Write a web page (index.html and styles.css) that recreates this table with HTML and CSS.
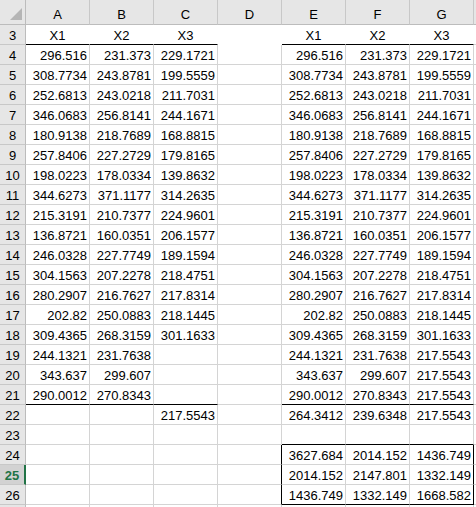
FILE: index.html
```html
<!DOCTYPE html>
<html>
<head>
<meta charset="utf-8">
<link rel="stylesheet" href="styles.css">
</head>
<body>
<div class="sheet">
  <div class="corner"><svg width="25" height="24" viewBox="0 0 25 24"><polygon points="22,8 22,20 10,20" fill="#b5b5b5"/></svg></div>
  <div class="ch">A</div><div class="ch">B</div><div class="ch">C</div><div class="ch">D</div><div class="ch">E</div><div class="ch">F</div><div class="ch">G</div><div class="ch last"></div>

  <div class="rh">3</div>
  <div class="c t w bb">X1</div><div class="c t w bb">X2</div><div class="c t w bb">X3</div><div class="c w wb"></div><div class="c t w bb">X1</div><div class="c t w bb">X2</div><div class="c t w bb">X3</div><div class="c w"></div>

  <div class="rh">4</div>
  <div class="c">296.516</div><div class="c">231.373</div><div class="c">229.1721</div><div class="c"></div><div class="c">296.516</div><div class="c">231.373</div><div class="c">229.1721</div><div class="c"></div>
  <div class="rh">5</div>
  <div class="c">308.7734</div><div class="c">243.8781</div><div class="c">199.5559</div><div class="c"></div><div class="c">308.7734</div><div class="c">243.8781</div><div class="c">199.5559</div><div class="c"></div>
  <div class="rh">6</div>
  <div class="c">252.6813</div><div class="c">243.0218</div><div class="c">211.7031</div><div class="c"></div><div class="c">252.6813</div><div class="c">243.0218</div><div class="c">211.7031</div><div class="c"></div>
  <div class="rh">7</div>
  <div class="c">346.0683</div><div class="c">256.8141</div><div class="c">244.1671</div><div class="c"></div><div class="c">346.0683</div><div class="c">256.8141</div><div class="c">244.1671</div><div class="c"></div>
  <div class="rh">8</div>
  <div class="c">180.9138</div><div class="c">218.7689</div><div class="c">168.8815</div><div class="c"></div><div class="c">180.9138</div><div class="c">218.7689</div><div class="c">168.8815</div><div class="c"></div>
  <div class="rh">9</div>
  <div class="c">257.8406</div><div class="c">227.2729</div><div class="c">179.8165</div><div class="c"></div><div class="c">257.8406</div><div class="c">227.2729</div><div class="c">179.8165</div><div class="c"></div>
  <div class="rh">10</div>
  <div class="c">198.0223</div><div class="c">178.0334</div><div class="c">139.8632</div><div class="c"></div><div class="c">198.0223</div><div class="c">178.0334</div><div class="c">139.8632</div><div class="c"></div>
  <div class="rh">11</div>
  <div class="c">344.6273</div><div class="c">371.1177</div><div class="c">314.2635</div><div class="c"></div><div class="c">344.6273</div><div class="c">371.1177</div><div class="c">314.2635</div><div class="c"></div>
  <div class="rh">12</div>
  <div class="c">215.3191</div><div class="c">210.7377</div><div class="c">224.9601</div><div class="c"></div><div class="c">215.3191</div><div class="c">210.7377</div><div class="c">224.9601</div><div class="c"></div>
  <div class="rh">13</div>
  <div class="c">136.8721</div><div class="c">160.0351</div><div class="c">206.1577</div><div class="c"></div><div class="c">136.8721</div><div class="c">160.0351</div><div class="c">206.1577</div><div class="c"></div>
  <div class="rh">14</div>
  <div class="c">246.0328</div><div class="c">227.7749</div><div class="c">189.1594</div><div class="c"></div><div class="c">246.0328</div><div class="c">227.7749</div><div class="c">189.1594</div><div class="c"></div>
  <div class="rh">15</div>
  <div class="c">304.1563</div><div class="c">207.2278</div><div class="c">218.4751</div><div class="c"></div><div class="c">304.1563</div><div class="c">207.2278</div><div class="c">218.4751</div><div class="c"></div>
  <div class="rh">16</div>
  <div class="c">280.2907</div><div class="c">216.7627</div><div class="c">217.8314</div><div class="c"></div><div class="c">280.2907</div><div class="c">216.7627</div><div class="c">217.8314</div><div class="c"></div>
  <div class="rh">17</div>
  <div class="c">202.82</div><div class="c">250.0883</div><div class="c">218.1445</div><div class="c"></div><div class="c">202.82</div><div class="c">250.0883</div><div class="c">218.1445</div><div class="c"></div>
  <div class="rh">18</div>
  <div class="c">309.4365</div><div class="c">268.3159</div><div class="c">301.1633</div><div class="c"></div><div class="c">309.4365</div><div class="c">268.3159</div><div class="c">301.1633</div><div class="c"></div>
  <div class="rh">19</div>
  <div class="c">244.1321</div><div class="c">231.7638</div><div class="c"></div><div class="c"></div><div class="c">244.1321</div><div class="c">231.7638</div><div class="c">217.5543</div><div class="c"></div>
  <div class="rh">20</div>
  <div class="c">343.637</div><div class="c">299.607</div><div class="c"></div><div class="c"></div><div class="c">343.637</div><div class="c">299.607</div><div class="c">217.5543</div><div class="c"></div>
  <div class="rh">21</div>
  <div class="c bb">290.0012</div><div class="c bb">270.8343</div><div class="c bb"></div><div class="c"></div><div class="c bb">290.0012</div><div class="c bb">270.8343</div><div class="c bb">217.5543</div><div class="c"></div>
  <div class="rh">22</div>
  <div class="c"></div><div class="c"></div><div class="c">217.5543</div><div class="c"></div><div class="c">264.3412</div><div class="c">239.6348</div><div class="c">217.5543</div><div class="c"></div>
  <div class="rh">23</div>
  <div class="c"></div><div class="c"></div><div class="c"></div><div class="c"></div><div class="c bb"></div><div class="c bb"></div><div class="c bb"></div><div class="c"></div>
  <div class="rh">24</div>
  <div class="c"></div><div class="c"></div><div class="c"></div><div class="c br"></div><div class="c">3627.684</div><div class="c">2014.152</div><div class="c br">1436.749</div><div class="c"></div>
  <div class="rh sel">25</div>
  <div class="c"></div><div class="c"></div><div class="c"></div><div class="c br"></div><div class="c">2014.152</div><div class="c">2147.801</div><div class="c br">1332.149</div><div class="c"></div>
  <div class="rh">26</div>
  <div class="c"></div><div class="c"></div><div class="c"></div><div class="c br"></div><div class="c bb">1436.749</div><div class="c bb">1332.149</div><div class="c br bb">1668.582</div><div class="c"></div>
  <div class="rh"></div>
  <div class="c"></div><div class="c"></div><div class="c"></div><div class="c"></div><div class="c"></div><div class="c"></div><div class="c"></div><div class="c"></div>
</div>
</body>
</html>
```

FILE: styles.css
```css
html, body {
  margin: 0;
  padding: 0;
  background: #ffffff;
  overflow: hidden;
}

.sheet {
  display: grid;
  grid-template-columns: 26px repeat(7, 64px) 1fr;
  grid-template-rows: 25px repeat(25, 20px);
  width: 476px;
  height: 507px;
  overflow: hidden;
  font-family: "Liberation Sans", Arial, sans-serif;
  font-size: 13px;
  color: #000000;
}

.sheet > div {
  box-sizing: border-box;
  border-right: 1px solid #d4d4d4;
  border-bottom: 1px solid #d4d4d4;
  white-space: nowrap;
  overflow: hidden;
  line-height: 15px;
}

.corner {
  background: #e6e6e6;
  border-right-color: #bcbcbc !important;
  border-bottom-color: #bcbcbc !important;
}

.corner svg {
  display: block;
}

.ch {
  background: #e6e6e6;
  border-right-color: #c8c8c8 !important;
  border-bottom-color: #bcbcbc !important;
  display: flex;
  align-items: flex-end;
  justify-content: center;
  padding-bottom: 2px;
}

.rh {
  background: #e6e6e6;
  border-right-color: #bcbcbc !important;
  border-bottom-color: #c8c8c8 !important;
  display: flex;
  align-items: flex-end;
  justify-content: center;
  padding-bottom: 1px;
}

.rh.sel {
  background: #d2d2d2;
  color: #217346;
  font-weight: bold;
  border-right: 2px solid #217346 !important;
}

.c {
  display: flex;
  align-items: flex-end;
  justify-content: flex-end;
  padding-right: 2px;
  padding-bottom: 1px;
}

.c.t {
  justify-content: center;
  padding-right: 0;
}

.c.w {
  border-right-color: #ffffff;
}

.c.wb {
  border-bottom-color: #ffffff;
}

.c.bb {
  border-bottom-color: #000000;
}

.c.br {
  border-right-color: #000000;
}
```
